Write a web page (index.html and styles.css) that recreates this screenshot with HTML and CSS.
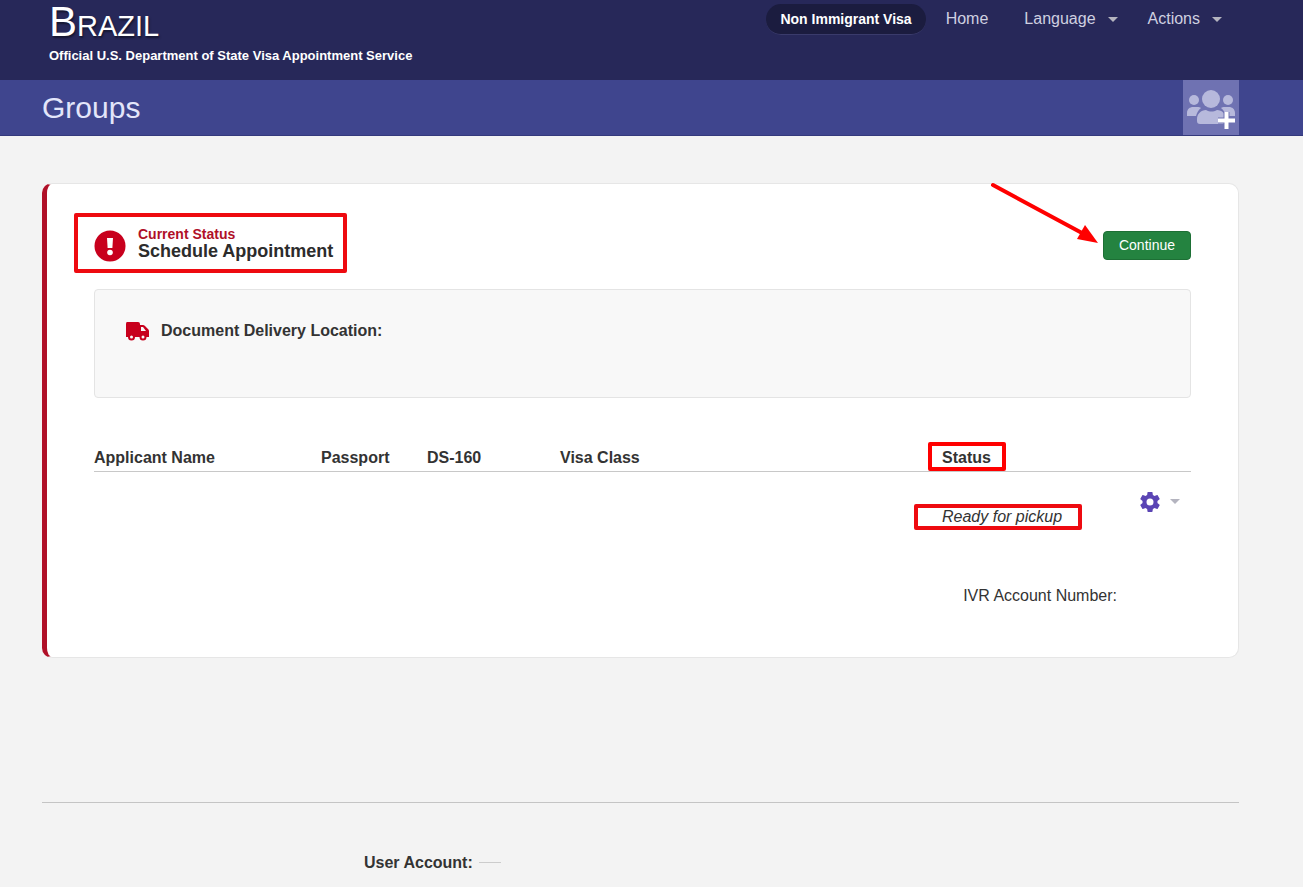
FILE: index.html
```html
<!DOCTYPE html>
<html lang="en">
<head>
    <meta charset="UTF-8">
    <meta name="viewport" content="width=device-width, initial-scale=1.0">
    <title>Groups - Brazil Visa Appointment Service</title>
    <link rel="stylesheet" href="styles.css">
</head>
<body>
    <header class="site-header">
        <div class="brand">
            <a href="#" class="brand-name">Brazil</a>
            <p class="brand-tagline">Official U.S. Department of State Visa Appointment Service</p>
        </div>
        <nav class="main-nav">
            <a href="#" class="nav-pill">Non Immigrant Visa</a>
            <a href="#" class="nav-link">Home</a>
            <a href="#" class="nav-link has-menu">Language <span class="caret"></span></a>
            <a href="#" class="nav-link has-menu">Actions <span class="caret"></span></a>
        </nav>
    </header>

    <div class="title-bar">
        <h1>Groups</h1>
        <a href="#" class="add-group" aria-label="New group">
            <svg viewBox="0 0 56 55" width="56" height="55">
                <g fill="#b7b9dc">
                    <circle cx="11" cy="20" r="5"></circle>
                    <circle cx="45" cy="20" r="5"></circle>
                    <path d="M4 36v-3c0-4 3-6 6-6h4c2 0 3 0 4 1-3 2-4 5-5 8z"></path>
                    <path d="M52 36v-3c0-4-3-6-6-6h-4c-2 0-3 0-4 1 3 2 4 5 5 8z"></path>
                    <circle cx="28" cy="19" r="9"></circle>
                    <path d="M14 41v-2c0-5 4-9 9-9 4 2 7 2 11 0 5 0 9 4 9 9v2q0 3-3 3H17q-3 0-3-3z"></path>
                </g>
                <path d="M43.500 32v17M35 40.500h17" stroke="#6f72b2" stroke-width="6"></path>
                <path d="M43.500 32v17M35 40.500h17" stroke="#fff" stroke-width="4"></path>
            </svg>
        </a>
    </div>

    <main class="content">
        <section class="card">
            <div class="card-top">
                <div class="status">
                    <svg class="status-icon" viewBox="0 0 32 32" width="32" height="32">
                        <circle cx="16" cy="16" r="15.500" fill="#c8001d"></circle>
                        <path d="M13 8h6l-.6 10h-4.800z" fill="#fff"></path>
                        <circle cx="16" cy="22.500" r="2.800" fill="#fff"></circle>
                    </svg>
                    <div>
                        <p class="status-label">Current Status</p>
                        <h2>Schedule Appointment</h2>
                    </div>
                </div>
                <a href="#" class="btn">Continue</a>
                <svg class="arrow" viewBox="0 0 110 64" width="110" height="64">
                    <path d="M3 3L92 51" stroke="#f00" stroke-width="4" stroke-linecap="round"></path>
                    <path d="M108 61L87 57L95 43z" fill="#f00"></path>
                </svg>
            </div>

            <div class="delivery">
                <svg viewBox="0 0 24 20" width="24" height="20">
                    <path d="M2 1h11q2 0 2 2v1h3q1 0 2 1l3 3q1 1 1 2v6H1V3q0-2 1-2z" fill="#c8001d"></path>
                    <path d="M16 6h2l3 4h-5z" fill="#f8f8f8"></path>
                    <g fill="#f8f8f8" stroke="#c8001d" stroke-width="2">
                        <circle cx="6.500" cy="16" r="2.500"></circle>
                        <circle cx="18" cy="16" r="2.500"></circle>
                    </g>
                </svg>
                <h3>Document Delivery Location:</h3>
            </div>

            <table class="applicants">
                <thead>
                    <tr>
                        <th class="col-name">Applicant Name</th>
                        <th class="col-passport">Passport</th>
                        <th class="col-ds">DS-160</th>
                        <th>Visa Class</th>
                        <th class="col-status"><span class="marked">Status</span></th>
                        <th class="col-actions"></th>
                    </tr>
                </thead>
                <tbody>
                    <tr>
                        <td></td>
                        <td></td>
                        <td></td>
                        <td></td>
                        <td class="state"><em class="marked marked-wide">Ready for pickup</em></td>
                        <td>
                            <button type="button" class="gear" aria-label="Applicant actions">
                                <svg viewBox="0 0 24 24" width="24" height="24">
                                    <path fill="#5b45b4" d="M19.430 12.980c.04-.32.07-.64.07-.98s-.03-.66-.07-.98l2.110-1.650c.19-.15.24-.42.12-.64l-2-3.460c-.12-.22-.39-.3-.61-.22l-2.490 1c-.52-.4-1.080-.73-1.690-.98l-.38-2.650C14.460 2.180 14.250 2 14 2h-4c-.25 0-.46.18-.49.42l-.38 2.650c-.61.25-1.170.59-1.690.98l-2.490-1c-.23-.09-.49 0-.61.22l-2 3.460c-.13.22-.07.49.12.64l2.110 1.650c-.04.32-.07.65-.07.98s.03.66.07.98l-2.110 1.650c-.19.15-.24.42-.12.64l2 3.460c.12.22.39.3.61.22l2.490-1c.52.4 1.080.73 1.690.98l.38 2.650c.03.24.24.42.49.42h4c.25 0 .46-.18.49-.42l.38-2.650c.61-.25 1.170-.59 1.690-.98l2.490 1c.23.09.49 0 .61-.22l2-3.460c.12-.22.07-.49-.12-.64zM12 15.500a3.500 3.500 0 1 1 0-7 3.500 3.500 0 0 1 0 7z"></path>
                                </svg>
                                <span class="caret"></span>
                            </button>
                        </td>
                    </tr>
                </tbody>
            </table>

            <p class="ivr">IVR Account Number:</p>
        </section>

        <footer class="site-footer">
            <p class="account">User Account: <span class="account-value"></span></p>
        </footer>
    </main>
</body>
</html>
```
FILE: styles.css
```css
* {
    margin: 0;
    padding: 0;
    box-sizing: border-box;
}

body {
    font-family: "Liberation Sans", Arial, sans-serif;
    font-size: 16px;
    line-height: 20px;
    color: #333;
    background: #f3f3f3;
}

a {
    text-decoration: none;
}

svg {
    display: block;
    flex-shrink: 0;
}

.site-header {
    display: flex;
    justify-content: space-between;
    height: 80px;
    padding: 4px 64px 0 49px;
    background: #272859;
}

.brand-name {
    display: block;
    color: #fff;
    font-size: 42px;
    line-height: 36px;
    font-variant: small-caps;
    text-shadow: 1px 2px 2px #15162f;
}

.brand-tagline {
    margin-top: 4px;
    color: #fff;
    font-size: 13px;
    line-height: 24px;
    font-weight: bold;
}

.main-nav {
    display: flex;
    align-items: flex-start;
    padding-right: 7px;
}

.nav-pill {
    padding: 0 14px;
    border-radius: 15px;
    background: #1b1c3f;
    border-bottom: 1px solid #3a3b6b;
    color: #fff;
    font-size: 14px;
    line-height: 30px;
    font-weight: bold;
}

.nav-link {
    display: flex;
    align-items: center;
    gap: 12px;
    padding: 0 16px 0 20px;
    color: #cfd0e0;
    line-height: 30px;
}

.has-menu {
    padding-right: 10px;
}

.caret {
    border: 5px solid transparent;
    border-top-color: #b4b4bf;
    border-bottom: 0;
}

.title-bar {
    display: flex;
    justify-content: space-between;
    height: 56px;
    padding: 0 64px 0 42px;
    background: #3f458e;
    border-bottom: 1px solid #34397c;
}

h1 {
    color: #e3e5fa;
    font-size: 30px;
    line-height: 55px;
    font-weight: normal;
}

.add-group {
    background: #6f72b2;
}

.content {
    padding: 47px 64px 0 42px;
}

.card {
    padding: 47px 47px 51px;
    background: #fff;
    border: 1px solid #e6e6e6;
    border-left: 5px solid #b01028;
    border-radius: 10px;
}

.card-top {
    position: relative;
    display: flex;
    justify-content: space-between;
    align-items: flex-start;
}

.status {
    position: relative;
    display: flex;
    gap: 12px;
    margin-top: -4px;
}

.status-icon {
    margin-top: 3px;
}

/* red callouts */
.status::after,
.marked::after {
    content: "";
    position: absolute;
    border: 4px solid #ee0a10;
    border-radius: 2px;
}

.status::after {
    inset: -14px -14px -11px -20px;
}

.status-label {
    color: #b01028;
    font-size: 14px;
    line-height: 14px;
    font-weight: bold;
}

h2 {
    font-size: 18px;
    line-height: 20px;
    color: #2c2c2c;
}

.btn {
    padding: 0 15px;
    background: #248340;
    border: 1px solid #1d6f35;
    border-radius: 4px;
    color: #fff;
    font-size: 14px;
    line-height: 27px;
}

.arrow {
    position: absolute;
    top: -49px;
    right: 91px;
    fill: none;
}

.delivery {
    display: flex;
    align-items: flex-start;
    gap: 12px;
    height: 109px;
    margin-top: 27px;
    padding: 31px 30px;
    background: #f8f8f8;
    border: 1px solid #e4e4e4;
    border-radius: 4px;
}

h3 {
    font-size: 16px;
    line-height: 20px;
}

.applicants {
    width: 100%;
    margin-top: 48px;
    border-collapse: collapse;
    table-layout: fixed;
}

.applicants th {
    height: 25px;
    padding: 0;
    text-align: left;
    border-bottom: 1px solid #c8c8c8;
}

.applicants td {
    padding-top: 18px;
    vertical-align: top;
}

.applicants .state {
    padding-top: 35px;
}

.col-name {
    width: 227px;
}

.col-passport {
    width: 106px;
}

.col-ds {
    width: 133px;
}

.col-status {
    width: 196px;
}

.col-actions {
    width: 53px;
}

.marked {
    position: relative;
}

.marked::after {
    inset: -7px -15px -5px -14px;
    border-color: #f00;
}

.marked-wide::after {
    inset: -4px -20px -5px -28px;
    border-color: #ee0a10;
}

.gear {
    display: flex;
    align-items: center;
    gap: 8px;
    background: none;
    border: 0;
    cursor: pointer;
}

.ivr {
    margin: 59px 74px 0 0;
    text-align: right;
}

.site-footer {
    margin-top: 144px;
    padding: 50px 0 14px 322px;
    border-top: 1px solid #c4c4c4;
}

.account {
    display: flex;
    align-items: center;
    gap: 6px;
    font-weight: bold;
}

.account-value {
    width: 22px;
    height: 1px;
    background: #ccc;
}
```
